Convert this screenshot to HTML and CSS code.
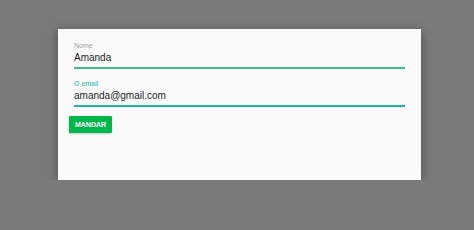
FILE: index.html
```html
<!DOCTYPE html>
<html lang="pt">
<head>
    <meta charset="UTF-8">
    <meta name="viewport" content="width=device-width, initial-scale=1.0">
    <title>Formulário</title>
    <link rel="stylesheet" href="styles.css">
</head>
<body>
    <div class="card">
        <form class="form">
            <div class="field">
                <label class="field-label" for="nome">Nome</label>
                <input class="field-input" id="nome" type="text" value="Amanda">
            </div>
            <div class="field field-active">
                <label class="field-label" for="email">O email</label>
                <input class="field-input" id="email" type="email" value="amanda@gmail.com">
            </div>
            <button class="btn" type="button">Mandar</button>
        </form>
    </div>
</body>
</html>
```

FILE: styles.css
```css
:root {
    --page-bg: #7a7a7a;
    --card-bg: #fafafa;
    --green: #00b84c;
    --line: #3cbf8f;
    --teal: #1fb6a6;
    --label: #9a9a9a;
    --text: #1e1e1e;
}

* {
    box-sizing: border-box;
    margin: 0;
    padding: 0;
}

body {
    font-family: 'Liberation Sans', Arial, sans-serif;
    background-color: var(--page-bg);
    padding: 29px 0 0 58px;
}

.card {
    width: 363px;
    height: 151px;
    background-color: var(--card-bg);
    box-shadow: 0 2px 10px rgba(0, 0, 0, 0.35);
    padding: 12px 16px 0 16px;
}

.form {
    display: flex;
    flex-direction: column;
}

.field {
    display: flex;
    flex-direction: column;
    margin-bottom: 10px;
}

.field-label {
    font-size: 7px;
    line-height: 9px;
    color: var(--label);
    height: 9px;
}

.field-input {
    font-family: inherit;
    font-size: 10px;
    line-height: 12px;
    height: 19px;
    color: var(--text);
    background: transparent;
    border: none;
    border-bottom: 2px solid var(--line);
    padding: 1px 0 4px 0;
    outline: none;
}

.field-active .field-label {
    color: var(--teal);
}

.field-active .field-input {
    border-bottom-color: var(--teal);
}

.btn {
    align-self: flex-start;
    margin-left: -5px;
    margin-top: -1px;
    width: 43px;
    height: 17px;
    background-color: var(--green);
    color: #fff;
    border: none;
    border-radius: 1px;
    font-family: inherit;
    font-size: 7px;
    font-weight: bold;
    text-transform: uppercase;
    box-shadow: 0 1px 2px rgba(0, 0, 0, 0.2);
}
```
